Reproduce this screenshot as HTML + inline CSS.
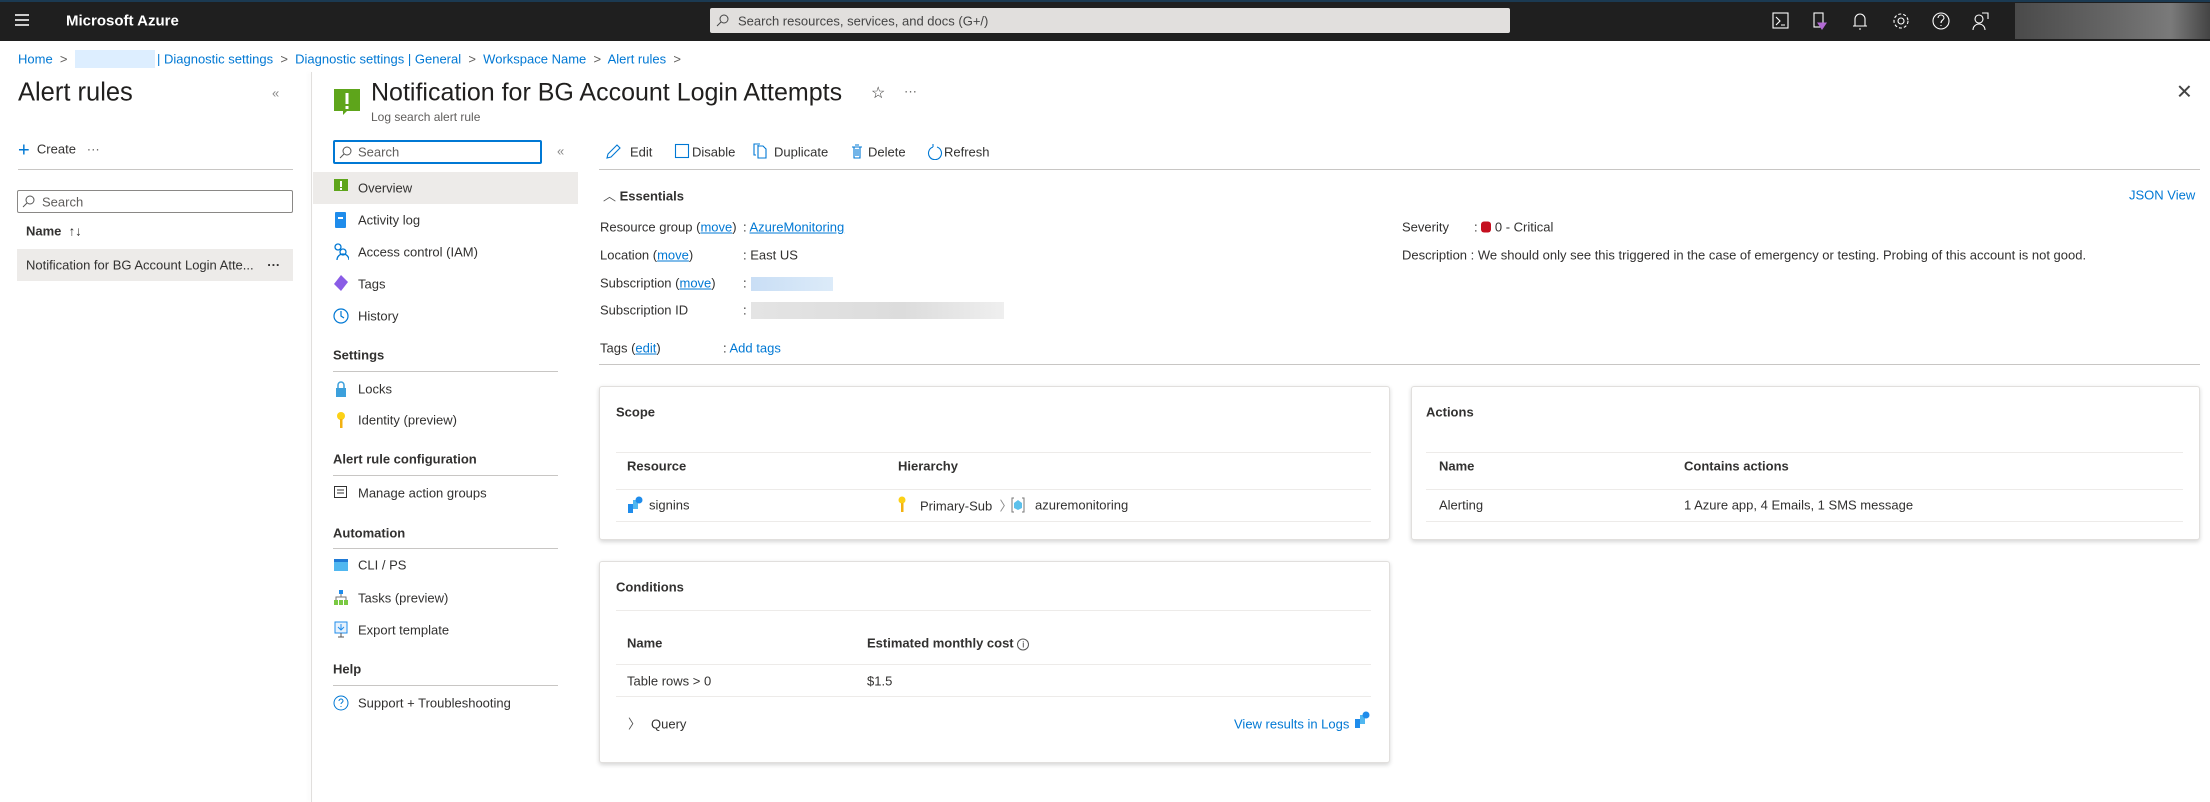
<!DOCTYPE html>
<html><head><meta charset="utf-8"><style>
*{box-sizing:border-box;margin:0;padding:0}
body{width:2210px;height:802px;overflow:hidden;background:#fff;font-family:"Liberation Sans",sans-serif;font-size:13px;color:#323130;position:relative}
.a{position:absolute;white-space:nowrap}
.l{color:#0078d4}
.u{text-decoration:underline}
.hd{background:#1f1f1f;height:41px;left:0;top:0;width:2210px;border-top:2px solid #1b3a52}
.ln{position:absolute;height:1px;background:#c8c6c4}
.ln2{position:absolute;height:1px;background:#edebe9}
.card{position:absolute;background:#fff;border:1px solid #e1dfdd;border-radius:3px;box-shadow:0 1.6px 4px rgba(0,0,0,.16)}
.t{transform:translateY(-50%)}
.sec{font-weight:bold;font-size:13px}
.th{font-weight:bold}
</style></head><body>
<div class="a hd"></div>
<div class="a" style="left:15px;top:14px;width:14px;height:2px;background:#ccc;box-shadow:0 5px 0 #ccc,0 10px 0 #ccc"></div>
<div class="a t" style="left:66px;top:21px;color:#fff;font-size:15px;font-weight:bold">Microsoft Azure</div>
<div class="a" style="left:710px;top:8px;width:800px;height:25px;background:#e1dfdd;border-radius:2px"></div>
<svg class="a" style="left:716px;top:14px" width="13" height="13" viewBox="0 0 13 13"><circle cx="8" cy="5" r="4" fill="none" stroke="#444"/><path d="M5 8L1 12" stroke="#444"/></svg>
<div class="a t" style="left:738px;top:21px;font-size:13px;color:#444">Search resources, services, and docs (G+/)</div>
<svg class="a" style="left:1772px;top:11px" width="230" height="20" viewBox="0 0 230 20" fill="none" stroke="#fff" stroke-width="1.1">
<rect x="1" y="2" width="15" height="15"/><path d="M4 6l4 4-4 4M9 14h4"/>
<rect x="42" y="2" width="9" height="14"/><path d="M46 12l4 6 4-6z" fill="#b36ad4" stroke="#b36ad4"/>
<path d="M83 15V8a5 5 0 0110 0v7zM81 15h14M87 18h2"/>
<circle cx="129" cy="10" r="3"/><circle cx="129" cy="10" r="7" stroke-dasharray="3 2"/>
<circle cx="169" cy="10" r="8"/><path d="M166 7a3 3 0 116 0c0 2-3 2-3 5M169 14v1"/>
<circle cx="207" cy="8" r="4"/><path d="M201 19a6 6 0 0112 0M210 2h6v6"/>
</svg>
<div class="a" style="left:2015px;top:3px;width:195px;height:36px;background:linear-gradient(90deg,#4a4a4a,#666 50%,#7a7a7a 80%,#444)"></div>

<div class="a t" style="left:18px;top:59px"><span class="l">Home</span> <span style="color:#605e5c">&nbsp;&gt;&nbsp;</span></div>
<div class="a" style="left:75px;top:50px;width:80px;height:18px;background:#ddeeff"></div>
<div class="a t l" style="left:157px;top:59px">| Diagnostic settings <span style="color:#605e5c">&nbsp;&gt;&nbsp;</span> Diagnostic settings | General <span style="color:#605e5c">&nbsp;&gt;&nbsp;</span> Workspace Name <span style="color:#605e5c">&nbsp;&gt;&nbsp;</span> Alert rules <span style="color:#605e5c">&nbsp;&gt;</span></div>

<div class="a t" style="left:18px;top:93px;font-size:25.5px;color:#201f1e">Alert rules</div>
<div class="a t" style="left:272px;top:93px;color:#888">«</div>
<div class="a t" style="left:18px;top:151px"><span style="color:#0078d4;font-size:20px;vertical-align:-3px">+</span>&nbsp; Create &nbsp;&nbsp;<span style="color:#605e5c">···</span></div>
<div class="ln" style="left:18px;top:169px;width:275px"></div>
<div class="a" style="left:17px;top:190px;width:276px;height:23px;border:1px solid #8a8886;border-radius:2px"></div>
<svg class="a" style="left:22px;top:195px" width="13" height="13"><circle cx="8" cy="5" r="4" fill="none" stroke="#555"/><path d="M5 8L1 12" stroke="#555"/></svg>
<div class="a t" style="left:42px;top:202px;color:#605e5c">Search</div>
<div class="a t" style="left:26px;top:231px;font-weight:bold">Name &nbsp;↑↓</div>
<div class="a" style="left:17px;top:249px;width:276px;height:32px;background:#edebe9"></div>
<div class="a t" style="left:26px;top:265px">Notification for BG Account Login Atte... <b style="margin-left:10px">···</b></div>
<div class="a" style="left:311px;top:72px;width:1px;height:730px;background:#e1dfdd;box-shadow:-2px 0 4px rgba(0,0,0,.08)"></div>

<svg class="a" style="left:333px;top:88px" width="28" height="28" viewBox="0 0 28 28"><path d="M1 1h26v22H14l-4 4v-4H1z" fill="#5ea51b"/><rect x="12.5" y="5" width="3" height="11" fill="#fff"/><rect x="12.5" y="18" width="3" height="3" fill="#fff"/></svg>
<div class="a t" style="left:371px;top:93px;font-size:25px;color:#201f1e">Notification for BG Account Login Attempts</div>
<div class="a t" style="left:371px;top:117px;font-size:12px;color:#605e5c">Log search alert rule</div>
<div class="a t" style="left:871px;top:93px;font-size:16px">☆</div>
<div class="a t" style="left:904px;top:91px;color:#605e5c">···</div>
<div class="a t" style="left:2176px;top:92px;font-size:20px;color:#444">✕</div>

<div class="a" style="left:333px;top:140px;width:209px;height:24px;border:2px solid #0078d4;border-radius:2px"></div>
<svg class="a" style="left:339px;top:146px" width="13" height="13"><circle cx="8" cy="5" r="4" fill="none" stroke="#555"/><path d="M5 8L1 12" stroke="#555"/></svg>
<div class="a t" style="left:358px;top:152px;color:#605e5c">Search</div>
<div class="a t" style="left:557px;top:151px;color:#888">«</div>
<div class="a" style="left:313px;top:172px;width:265px;height:32px;background:#edebe9"></div>
<svg class="a" style="left:333px;top:178px" width="16" height="16"><rect x="1" y="1" width="14" height="12" fill="#5ea51b"/><rect x="7" y="3" width="2" height="6" fill="#fff"/><rect x="7" y="10" width="2" height="2" fill="#fff"/></svg>
<div class="a t" style="left:358px;top:188px">Overview</div>
<svg class="a" style="left:333px;top:211px" width="16" height="18"><rect x="2" y="1" width="11" height="16" rx="1" fill="#1f8ceb"/><rect x="5" y="6" width="5" height="2" fill="#fff"/></svg>
<div class="a t" style="left:358px;top:220px">Activity log</div>
<svg class="a" style="left:333px;top:243px" width="16" height="18" fill="none" stroke="#0078d4" stroke-width="1.3"><circle cx="5" cy="4" r="3"/><circle cx="10" cy="9" r="3"/><path d="M4 17a6 6 0 0112 0"/></svg>
<div class="a t" style="left:358px;top:252px">Access control (IAM)</div>
<svg class="a" style="left:333px;top:274px" width="16" height="18"><path d="M8 1l7 7-7 9-7-7z" fill="#8a5ce6"/></svg>
<div class="a t" style="left:358px;top:284px">Tags</div>
<svg class="a" style="left:333px;top:307px" width="16" height="18" fill="none" stroke="#0078d4" stroke-width="1.2"><circle cx="8" cy="9" r="7"/><path d="M8 4v5l3 2"/></svg>
<div class="a t" style="left:358px;top:316px">History</div>
<div class="a t sec" style="left:333px;top:355px">Settings</div>
<div class="ln" style="left:333px;top:371px;width:225px"></div>
<svg class="a" style="left:333px;top:380px" width="16" height="18"><path d="M5 8V5a3 3 0 016 0v3" fill="none" stroke="#3ca0dc" stroke-width="1.5"/><rect x="3" y="8" width="10" height="9" fill="#3ca0dc"/></svg>
<div class="a t" style="left:358px;top:389px">Locks</div>
<svg class="a" style="left:333px;top:411px" width="16" height="18"><circle cx="8" cy="5" r="4" fill="#fcd116"/><rect x="7" y="8" width="2.5" height="9" fill="#f2b111"/></svg>
<div class="a t" style="left:358px;top:420px">Identity (preview)</div>
<div class="a t sec" style="left:333px;top:459px">Alert rule configuration</div>
<div class="ln" style="left:333px;top:475px;width:225px"></div>
<svg class="a" style="left:333px;top:484px" width="16" height="18" fill="none" stroke="#333"><rect x="1.5" y="2.5" width="12" height="11"/><path d="M4 6h7M4 9h7"/></svg>
<div class="a t" style="left:358px;top:493px">Manage action groups</div>
<div class="a t sec" style="left:333px;top:533px">Automation</div>
<div class="ln" style="left:333px;top:548px;width:225px"></div>
<svg class="a" style="left:333px;top:557px" width="16" height="16"><rect x="1" y="2" width="14" height="12" fill="#50b7f0"/><rect x="1" y="2" width="14" height="3" fill="#1f7ad6"/></svg>
<div class="a t" style="left:358px;top:565px">CLI / PS</div>
<svg class="a" style="left:333px;top:589px" width="16" height="18"><rect x="6" y="1" width="4" height="4" fill="#1f8ceb"/><rect x="1" y="11" width="4" height="5" fill="#7ac943"/><rect x="6" y="11" width="4" height="5" fill="#7ac943"/><rect x="11" y="11" width="4" height="5" fill="#7ac943"/><path d="M8 5v3M3 11V8h10v3" stroke="#777" fill="none"/></svg>
<div class="a t" style="left:358px;top:598px">Tasks (preview)</div>
<svg class="a" style="left:333px;top:621px" width="16" height="18"><rect x="2" y="1" width="12" height="11" fill="#e8f2fc" stroke="#1f8ceb"/><path d="M8 3v6M5 6l3 3 3-3" stroke="#1f8ceb" fill="none"/><path d="M8 12v4M5 16h6" stroke="#555"/></svg>
<div class="a t" style="left:358px;top:630px">Export template</div>
<div class="a t sec" style="left:333px;top:669px">Help</div>
<div class="ln" style="left:333px;top:685px;width:225px"></div>
<svg class="a" style="left:333px;top:694px" width="16" height="18" fill="none" stroke="#0078d4"><circle cx="8" cy="9" r="7"/><path d="M6 7a2 2 0 114 0c0 1.5-2 1.5-2 3M8 12v1"/></svg>
<div class="a t" style="left:358px;top:703px">Support + Troubleshooting</div>

<svg class="a" style="left:605px;top:143px" width="360" height="17" fill="none" stroke="#0078d4" stroke-width="1.1">
<path d="M2 15l1-4 9-9 3 3-9 9z"/>
<rect x="70.5" y="1.5" width="13" height="13"/>
<path d="M153 3h5l3 3v9h-8zM153 3v-1M151 12h-2V1h6"/>
<path d="M247 4h10M249 4v11h6V4M250 2h4M251 6v7M253 6v7"/>
<path d="M328 4a6.5 6.5 0 104 0M328 4V1"/>
</svg>
<div class="a t" style="left:630px;top:152px">Edit</div>
<div class="a t" style="left:692px;top:152px">Disable</div>
<div class="a t" style="left:774px;top:152px">Duplicate</div>
<div class="a t" style="left:868px;top:152px">Delete</div>
<div class="a t" style="left:944px;top:152px">Refresh</div>
<div class="ln" style="left:599px;top:169px;width:1601px"></div>

<div class="a t" style="left:603px;top:195px;font-weight:bold"><span style="font-weight:normal;color:#555">︿</span> Essentials</div>
<div class="a t l" style="left:2129px;top:195px">JSON View</div>
<div class="a t" style="left:600px;top:227px">Resource group (<span class="l u">move</span>)</div>
<div class="a t" style="left:743px;top:227px">: <span class="l u">AzureMonitoring</span></div>
<div class="a t" style="left:600px;top:255px">Location (<span class="l u">move</span>)</div>
<div class="a t" style="left:743px;top:255px">: East US</div>
<div class="a t" style="left:600px;top:283px">Subscription (<span class="l u">move</span>)</div>
<div class="a t" style="left:743px;top:283px">:</div>
<div class="a" style="left:751px;top:277px;width:82px;height:14px;background:linear-gradient(90deg,#c9def5,#dcebf9)"></div>
<div class="a t" style="left:600px;top:310px">Subscription ID</div>
<div class="a t" style="left:743px;top:310px">:</div>
<div class="a" style="left:751px;top:302px;width:253px;height:17px;background:linear-gradient(90deg,#e4e4e4,#dcdcdc 60%,#efefef)"></div>
<div class="a t" style="left:600px;top:348px">Tags (<span class="l u">edit</span>)</div>
<div class="a t" style="left:723px;top:348px">: <span class="l">Add tags</span></div>
<div class="a t" style="left:1402px;top:227px">Severity</div>
<div class="a t" style="left:1474px;top:227px">: <span style="display:inline-block;width:10px;height:11px;border-radius:3px;background:#c50f1f;vertical-align:-1px"></span> 0 - Critical</div>
<div class="a t" style="left:1402px;top:255px">Description : We should only see this triggered in the case of emergency or testing. Probing of this account is not good.</div>
<div class="ln" style="left:599px;top:364px;width:1601px"></div>

<div class="card" style="left:599px;top:386px;width:791px;height:154px"></div>
<div class="a t" style="left:616px;top:412px;font-weight:bold">Scope</div>
<div class="ln2" style="left:616px;top:452px;width:755px"></div>
<div class="a t th" style="left:627px;top:466px">Resource</div>
<div class="a t th" style="left:898px;top:466px">Hierarchy</div>
<div class="ln2" style="left:616px;top:489px;width:755px"></div>
<svg class="a" style="left:627px;top:496px" width="16" height="18"><rect x="1" y="8" width="5" height="9" fill="#1f8ceb"/><rect x="6" y="4" width="5" height="9" fill="#50b7f0"/><circle cx="12" cy="4" r="3.5" fill="#1f8ceb"/></svg>
<div class="a t" style="left:649px;top:505px">signins</div>
<svg class="a" style="left:897px;top:496px" width="12" height="18"><circle cx="5" cy="4" r="3.5" fill="#fcd116"/><rect x="4" y="7" width="2.5" height="9" fill="#f2b111"/></svg>
<div class="a t" style="left:920px;top:505px">Primary-Sub <span style="color:#888">&nbsp;〉</span></div>
<svg class="a" style="left:1011px;top:497px" width="14" height="16"><path d="M3 1H1v14h2M11 1h2v14h-2" stroke="#777" fill="none"/><path d="M7 3l4 3v5l-4 2-4-2V6z" fill="#5bc0eb"/></svg>
<div class="a t" style="left:1035px;top:505px">azuremonitoring</div>
<div class="ln2" style="left:616px;top:521px;width:755px"></div>

<div class="card" style="left:1411px;top:386px;width:789px;height:154px"></div>
<div class="a t" style="left:1426px;top:412px;font-weight:bold">Actions</div>
<div class="ln2" style="left:1426px;top:452px;width:757px"></div>
<div class="a t th" style="left:1439px;top:466px">Name</div>
<div class="a t th" style="left:1684px;top:466px">Contains actions</div>
<div class="ln2" style="left:1426px;top:489px;width:757px"></div>
<div class="a t" style="left:1439px;top:505px">Alerting</div>
<div class="a t" style="left:1684px;top:505px">1 Azure app, 4 Emails, 1 SMS message</div>
<div class="ln2" style="left:1426px;top:521px;width:757px"></div>

<div class="card" style="left:599px;top:561px;width:791px;height:202px"></div>
<div class="a t" style="left:616px;top:587px;font-weight:bold">Conditions</div>
<div class="ln2" style="left:616px;top:610px;width:755px"></div>
<div class="a t th" style="left:627px;top:643px">Name</div>
<div class="a t th" style="left:867px;top:643px">Estimated monthly cost <span style="display:inline-block;width:12px;height:12px;border:1px solid #555;border-radius:50%;font-size:9px;text-align:center;line-height:10px;font-weight:normal">i</span></div>
<div class="ln2" style="left:616px;top:664px;width:755px"></div>
<div class="a t" style="left:627px;top:681px">Table rows &gt; 0</div>
<div class="a t" style="left:867px;top:681px">$1.5</div>
<div class="ln2" style="left:616px;top:696px;width:755px"></div>
<div class="a t" style="left:628px;top:723px;color:#555">〉</div>
<div class="a t" style="left:651px;top:724px">Query</div>
<div class="a t l" style="left:1234px;top:724px">View results in Logs</div>
<svg class="a" style="left:1354px;top:711px" width="16" height="18"><rect x="1" y="8" width="5" height="9" fill="#1f8ceb"/><rect x="6" y="4" width="5" height="9" fill="#50b7f0"/><circle cx="12" cy="4" r="3.5" fill="#1f8ceb"/></svg>
</body></html>
